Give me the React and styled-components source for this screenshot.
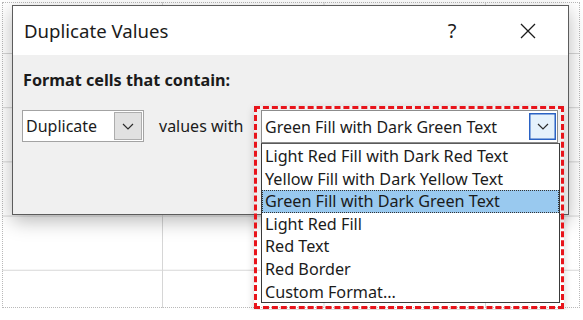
import React from 'react';
import styled, { createGlobalStyle } from 'styled-components';

const GlobalStyle = createGlobalStyle`
  html, body {
    margin: 0;
    padding: 0;
    background: #fff;
  }
  body {
    font-family: 'Noto Sans', 'Open Sans', sans-serif;
    color: #1b1b1b;
  }
`;

// spreadsheet behind the dialog
const Sheet = styled.div`
  position: relative;
  width: 578px;
  height: 306px;
  margin: 2px;
  box-sizing: border-box;
  border: 1px dotted #b9b9b9;
  background-color: #fff;
  background-image:
    linear-gradient(to right, #d6d6d6 1px, transparent 1px),
    linear-gradient(to bottom, #d6d6d6 1px, transparent 1px);
  background-size: 161.5px 100%, 100% 54.2px;
  background-position: 159px 0, 0 50px;
`;

const Dialog = styled.div`
  position: absolute;
  left: 9px;
  top: 2px;
  width: 557px;
  height: 210px;
  box-sizing: border-box;
  border: 1px solid #5c5c5c;
  background: #f0f0f0;
  box-shadow: 0 6px 18px rgba(0, 0, 0, 0.28);
  display: flex;
  flex-direction: column;
`;

const TitleBar = styled.div`
  height: 49px;
  flex-shrink: 0;
  background: #fff;
  display: flex;
  align-items: center;
  padding: 0 25px 0 11px;
`;

const Title = styled.div`
  flex: 1;
  font-size: 18.6px;
  color: #1b1b1b;
`;

const TitleButtons = styled.div`
  display: flex;
  align-items: center;
  gap: 46px;
`;

const TitleButton = styled.div`
  width: 30px;
  height: 30px;
  display: flex;
  align-items: center;
  justify-content: center;
  font-size: 20px;
  color: #1b1b1b;
`;

const Body = styled.div`
  flex: 1;
  padding: 14px 0 0 9px;
`;

const SectionLabel = styled.div`
  margin-left: 1px;
  font-size: 16.2px;
  font-weight: 700;
  line-height: 22px;
`;

const Row = styled.div`
  display: flex;
  align-items: flex-start;
  margin-top: 15px;
`;

const Select = styled.div`
  margin-top: ${(p) => (p.$flush ? 0 : 4)}px;
  width: ${(p) => p.$width}px;
  height: ${(p) => p.$height}px;
  box-sizing: border-box;
  border: 1px solid ${(p) => (p.$dark ? '#8c8c8c' : '#a3a3a3')};
  background: #fff;
  display: flex;
  align-items: center;
  padding-left: 3px;
  font-size: 16px;
`;

const SelectText = styled.span`
  flex: 1;
  white-space: nowrap;
`;

const DropButton = styled.div`
  width: ${(p) => p.$size}px;
  height: ${(p) => p.$size}px;
  margin-right: 1px;
  box-sizing: border-box;
  display: flex;
  align-items: center;
  justify-content: center;
  background: ${(p) => (p.$focused ? '#e5f1fb' : '#e1e1e1')};
  border: 1px solid ${(p) => (p.$focused ? '#2a62c4' : '#adadad')};
  box-shadow: ${(p) => (p.$focused ? 'inset 0 0 0 0.5px #2a62c4' : 'none')};
`;

const ValuesLabel = styled.div`
  margin-top: 4px;
  width: 110px;
  box-sizing: border-box;
  padding-left: 15px;
  line-height: 32px;
  font-size: 16px;
  white-space: nowrap;
`;

// red dashed highlight around the open combo box
const Highlight = styled.div`
  width: 310px;
  box-sizing: border-box;
  border: 3px dashed #e8141b;
  padding: 1px 1px 3px 4px;
  box-shadow: 0 3px 8px rgba(0, 0, 0, 0.18);
`;

const List = styled.div`
  width: 299px;
  height: 160px;
  box-sizing: border-box;
  border: 1px solid #3a3a3a;
  border-top-color: #5a5a5a;
  background: #fff;
  padding-top: 1px;
`;

const Option = styled.div`
  height: 22.6px;
  line-height: 21px;
  box-sizing: border-box;
  padding-left: 2px;
  font-size: 16.2px;
  white-space: nowrap;
  border: 1px ${(p) => (p.$selected ? 'dotted #333' : 'solid transparent')};
  background: ${(p) => (p.$selected ? '#99c9ef' : 'transparent')};
`;

const Chevron = () => (
  <svg width="12" height="7" viewBox="0 0 12 7">
    <polyline points="1,1 6,6 11,1" fill="none" stroke="#2b2b2b" strokeWidth="1.2" />
  </svg>
);

const CloseIcon = () => (
  <svg width="16" height="16" viewBox="0 0 16 16">
    <path d="M1 1 L15 15 M15 1 L1 15" stroke="#1b1b1b" strokeWidth="1.3" />
  </svg>
);

const options = [
  'Light Red Fill with Dark Red Text',
  'Yellow Fill with Dark Yellow Text',
  'Green Fill with Dark Green Text',
  'Light Red Fill',
  'Red Text',
  'Red Border',
  'Custom Format...',
];

const App = () => {
  const selected = 'Green Fill with Dark Green Text';
  return (
    <>
      <GlobalStyle />
      <Sheet>
        <Dialog>
          <TitleBar>
            <Title>Duplicate Values</Title>
            <TitleButtons>
              <TitleButton>?</TitleButton>
              <TitleButton>
                <CloseIcon />
              </TitleButton>
            </TitleButtons>
          </TitleBar>
          <Body>
            <SectionLabel>Format cells that contain:</SectionLabel>
            <Row>
              <Select $width={122} $height={32}>
                <SelectText>Duplicate</SelectText>
                <DropButton $size={28}>
                  <Chevron />
                </DropButton>
              </Select>
              <ValuesLabel>values with</ValuesLabel>
              <Highlight>
                <Select $flush $width={297} $height={33} $dark>
                  <SelectText>{selected}</SelectText>
                  <DropButton $size={27} $focused>
                    <Chevron />
                  </DropButton>
                </Select>
                <List>
                  {options.map((opt) => (
                    <Option key={opt} $selected={opt === selected}>
                      {opt}
                    </Option>
                  ))}
                </List>
              </Highlight>
            </Row>
          </Body>
        </Dialog>
      </Sheet>
    </>
  );
};

export default App;
